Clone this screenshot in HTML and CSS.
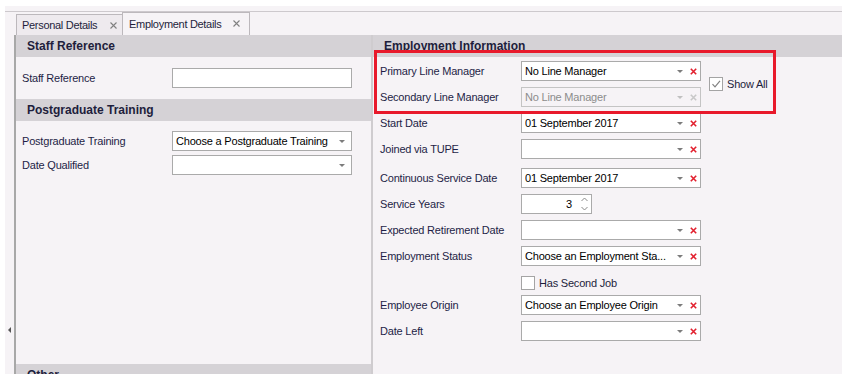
FILE: index.html
```html
<!DOCTYPE html>
<html>
<head>
<meta charset="utf-8">
<link rel="stylesheet" href="styles.css">
</head>
<body>
<div class="frame">
  <div class="tabstrip">
    <div class="tab tab-personal"><span>Personal Details</span><svg class="tab-x" width="7" height="7" viewBox="0 0 7 7"><path d="M0.5 0.5L6.5 6.5M6.5 0.5L0.5 6.5" stroke="#808080" stroke-width="1.1"/></svg></div>
    <div class="tab tab-active"><span>Employment Details</span><svg class="tab-x" width="7" height="7" viewBox="0 0 7 7"><path d="M0.5 0.5L6.5 6.5M6.5 0.5L0.5 6.5" stroke="#808080" stroke-width="1.1"/></svg></div>
  </div>
  <div class="body">
    <div class="gutter"><span class="collapse"></span></div>
    <div class="content">
      <div class="panel left">
        <div class="hdr">Staff Reference</div>
        <div class="sec sec-staff">
          <div class="row"><span class="lbl">Staff Reference</span><div class="edit"></div></div>
        </div>
        <div class="hdr">Postgraduate Training</div>
        <div class="sec sec-pg">
          <div class="row"><span class="lbl">Postgraduate Training</span><div class="combo"><span class="val">Choose a Postgraduate Training</span><span class="arr arr-end"></span></div></div>
          <div class="row"><span class="lbl">Date Qualified</span><div class="combo"><span class="val"></span><span class="arr arr-end"></span></div></div>
        </div>
        <div class="hdr">Other</div>
      </div>
      <div class="divider"></div>
      <div class="panel right">
        <div class="hdr">Employment Information</div>
        <div class="rows">
          <div class="lm-group">
            <div class="lm-rows">
              <div class="row"><span class="lbl">Primary Line Manager</span><div class="combo"><span class="val">No Line Manager</span><span class="arr"></span><svg class="clr" width="7" height="7" viewBox="0 0 7 7"><path d="M0.8 0.8L6.2 6.2M6.2 0.8L0.8 6.2" stroke="#e2202e" stroke-width="1.6"/></svg></div></div>
              <div class="row"><span class="lbl">Secondary Line Manager</span><div class="combo disabled"><span class="val">No Line Manager</span><span class="arr"></span><svg class="clr" width="7" height="7" viewBox="0 0 7 7"><path d="M0.8 0.8L6.2 6.2M6.2 0.8L0.8 6.2" stroke="#c8c8c8" stroke-width="1.6"/></svg></div></div>
            </div>
            <div class="check showall"><span class="box"><svg width="12" height="12" viewBox="0 0 12 12"><path d="M2.5 6.2L5 8.8L10 2.8" fill="none" stroke="#808080" stroke-width="1.2"/></svg></span><span class="ctext">Show All</span></div>
          </div>
          <div class="row gap6"><span class="lbl">Start Date</span><div class="combo"><span class="val">01 September 2017</span><span class="arr"></span><svg class="clr" width="7" height="7" viewBox="0 0 7 7"><path d="M0.8 0.8L6.2 6.2M6.2 0.8L0.8 6.2" stroke="#e2202e" stroke-width="1.6"/></svg></div></div>
          <div class="row gap6"><span class="lbl">Joined via TUPE</span><div class="combo"><span class="val"></span><span class="arr"></span><svg class="clr" width="7" height="7" viewBox="0 0 7 7"><path d="M0.8 0.8L6.2 6.2M6.2 0.8L0.8 6.2" stroke="#e2202e" stroke-width="1.6"/></svg></div></div>
          <div class="row gap9"><span class="lbl">Continuous Service Date</span><div class="combo"><span class="val">01 September 2017</span><span class="arr"></span><svg class="clr" width="7" height="7" viewBox="0 0 7 7"><path d="M0.8 0.8L6.2 6.2M6.2 0.8L0.8 6.2" stroke="#e2202e" stroke-width="1.6"/></svg></div></div>
          <div class="row gap6"><span class="lbl">Service Years</span><div class="spin"><span class="num">3</span><svg class="spin-arr" width="7" height="14" viewBox="0 0 7 14"><path d="M0.5 4L3.5 1L6.5 4M0.5 10L3.5 13L6.5 10" fill="none" stroke="#8a8a8a" stroke-width="1"/></svg></div></div>
          <div class="row gap6"><span class="lbl">Expected Retirement Date</span><div class="combo"><span class="val"></span><span class="arr"></span><svg class="clr" width="7" height="7" viewBox="0 0 7 7"><path d="M0.8 0.8L6.2 6.2M6.2 0.8L0.8 6.2" stroke="#e2202e" stroke-width="1.6"/></svg></div></div>
          <div class="row gap6"><span class="lbl">Employment Status</span><div class="combo"><span class="val">Choose an Employment Sta...</span><span class="arr"></span><svg class="clr" width="7" height="7" viewBox="0 0 7 7"><path d="M0.8 0.8L6.2 6.2M6.2 0.8L0.8 6.2" stroke="#e2202e" stroke-width="1.6"/></svg></div></div>
          <div class="check second"><span class="box"></span><span class="ctext">Has Second Job</span></div>
          <div class="row gap5"><span class="lbl">Employee Origin</span><div class="combo"><span class="val">Choose an Employee Origin</span><span class="arr"></span><svg class="clr" width="7" height="7" viewBox="0 0 7 7"><path d="M0.8 0.8L6.2 6.2M6.2 0.8L0.8 6.2" stroke="#e2202e" stroke-width="1.6"/></svg></div></div>
          <div class="row gap6"><span class="lbl">Date Left</span><div class="combo"><span class="val"></span><span class="arr"></span><svg class="clr" width="7" height="7" viewBox="0 0 7 7"><path d="M0.8 0.8L6.2 6.2M6.2 0.8L0.8 6.2" stroke="#e2202e" stroke-width="1.6"/></svg></div></div>
        </div>
        <div class="highlight"></div>
      </div>
    </div>
  </div>
</div>
</body>
</html>
```

FILE: styles.css
```css
html, body {
  margin: 0;
  padding: 0;
  background: #ffffff;
}

body {
  font-family: "Liberation Sans", Arial, sans-serif;
  font-size: 11px;
  letter-spacing: -0.2px;
  color: #1e1e46;
}

.frame {
  margin: 6px 0 0 5px;
  width: 837px;
  height: 368px;
  background: #f6f3f6;
  display: flex;
  flex-direction: column;
  overflow: hidden;
  padding-top: 5px;
  box-sizing: border-box;
}

.tabstrip {
  flex: none;
  height: 24px;
  border-top: 1px solid #cdc9cd;
  box-sizing: border-box;
  display: flex;
  align-items: flex-end;
  padding-left: 11px;
}

.tab {
  box-sizing: border-box;
  display: flex;
  align-items: center;
  border: 1px solid #bcb8bc;
  border-bottom: none;
  color: #1e1e3c;
  font-size: 11px;
  letter-spacing: -0.3px;
}

.tab-personal {
  width: 106px;
  height: 21px;
  padding-left: 5px;
  background: #eeeaee;
  border-right: none;
}

.tab-active {
  width: 128px;
  height: 23px;
  padding-left: 6px;
  background: #f6f3f6;
  padding-bottom: 1px;
}

.tab-x {
  margin-left: 13px;
  flex: none;
}

.tab-active .tab-x {
  margin-left: 12px;
}

.body {
  flex: 1;
  display: flex;
  min-height: 0;
}

.gutter {
  width: 9px;
  flex: none;
  display: flex;
  flex-direction: column;
  justify-content: flex-end;
  align-items: center;
  padding-bottom: 41px;
  box-sizing: border-box;
}

.collapse {
  width: 0;
  height: 0;
  border-top: 3px solid transparent;
  border-bottom: 3px solid transparent;
  border-right: 3px solid #555555;
}

.content {
  flex: 1;
  display: flex;
  border-left: 2px solid #a8a8a8;
  min-width: 0;
}

.panel {
  display: flex;
  flex-direction: column;
  overflow: hidden;
}

.left {
  width: 355px;
  flex: none;
}

.divider {
  width: 2px;
  flex: none;
  background: #cfcccf;
}

.right {
  flex: 1;
  position: relative;
  overflow: visible;
}

.hdr {
  flex: none;
  height: 22px;
  background: #d5d2d6;
  font-weight: bold;
  font-size: 12px;
  letter-spacing: 0;
  color: #1e1e3c;
  padding-left: 11px;
  display: flex;
  align-items: center;
}

.sec {
  flex: none;
  padding-left: 6px;
  box-sizing: border-box;
}

.sec-staff {
  height: 42px;
  padding-top: 11px;
}

.sec-pg {
  height: 243px;
  padding-top: 10px;
  display: flex;
  flex-direction: column;
  gap: 4px;
}

.row {
  display: flex;
  align-items: center;
  height: 20px;
}

.lbl {
  width: 150px;
  flex: none;
  white-space: nowrap;
}

.rows .lbl {
  width: 141px;
}

.edit,
.combo,
.spin {
  box-sizing: border-box;
  height: 20px;
  border: 1px solid #aaaaaa;
  background: #ffffff;
  color: #000000;
}

.edit {
  width: 180px;
}

.combo {
  width: 180px;
  display: flex;
  align-items: center;
  padding-left: 3px;
}

.val {
  flex: 1;
  white-space: nowrap;
  overflow: hidden;
}

.arr {
  flex: none;
  width: 0;
  height: 0;
  border-left: 3px solid transparent;
  border-right: 3px solid transparent;
  border-top: 3px solid #7c7c7c;
  margin-right: 7px;
}

.arr.arr-end {
  margin-right: 6px;
}

.clr {
  flex: none;
  margin-right: 3px;
}

.combo.disabled {
  background: #f6f3f6;
  border-color: #c4c4c4;
  color: #8c8c8c;
}

.combo.disabled .arr {
  border-top-color: #c0c0c0;
}

.rows {
  padding-left: 7px;
  padding-top: 4px;
}

.lm-group {
  display: flex;
  align-items: center;
}

.lm-rows {
  display: flex;
  flex-direction: column;
  gap: 6px;
}

.gap5 { margin-top: 5px; }
.gap6 { margin-top: 6px; }
.gap9 { margin-top: 9px; }

.spin {
  width: 71px;
  display: flex;
  align-items: center;
  justify-content: flex-end;
  padding-right: 3px;
}

.num {
  margin-right: 9px;
}

.check {
  display: flex;
  align-items: center;
  color: #1e1e3c;
}

.box {
  width: 14px;
  height: 14px;
  box-sizing: border-box;
  border: 1px solid #a4a4a4;
  background: #ffffff;
  display: flex;
  align-items: center;
  justify-content: center;
  margin-right: 4px;
}

.showall {
  margin-left: 8px;
}

.second {
  margin-left: 141px;
  margin-top: 10px;
  height: 14px;
}

.highlight {
  position: absolute;
  left: 1px;
  top: 15px;
  width: 402px;
  height: 64px;
  box-sizing: border-box;
  border: 3px solid #e8192b;
  pointer-events: none;
}
```
